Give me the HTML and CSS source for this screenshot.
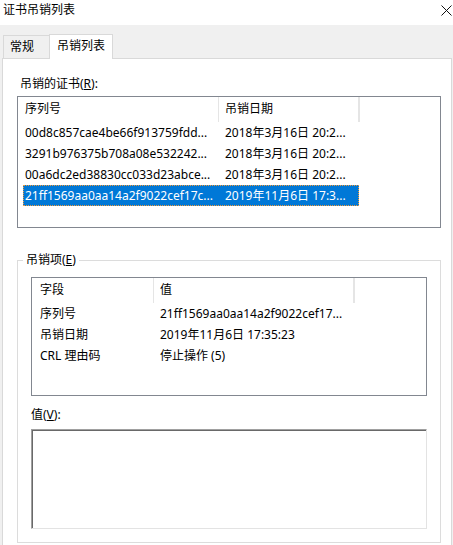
FILE: index.html
```html
<!DOCTYPE html>
<html lang="zh-CN">
<head>
<meta charset="utf-8">
<title>证书吊销列表</title>
<link rel="stylesheet" href="styles.css">
</head>
<body>
<div class="window">
  <div class="titlebar">
    <span class="title">证书吊销列表</span>
    <svg class="close" width="11" height="11" viewBox="0 0 11 11" aria-label="关闭">
      <path d="M0.5 0.5 L10.5 10.5 M10.5 0.5 L0.5 10.5" stroke="#111" stroke-width="1" fill="none"/>
    </svg>
  </div>
  <div class="tabs">
    <div class="tab">常规</div>
    <div class="tab tab-active">吊销列表</div>
  </div>
  <div class="panel">
    <div class="label">吊销的证书(<u>R</u>):</div>
    <div class="listbox list-certs">
      <div class="lv-header">
        <div class="hcell c1">序列号</div>
        <div class="hcell c2">吊销日期</div>
        <div class="hcell c3"></div>
      </div>
      <div class="lv-row">
        <div class="cell c1">00d8c857cae4be66f913759fdd...</div>
        <div class="cell c2">2018年3月16日 20:2...</div>
      </div>
      <div class="lv-row">
        <div class="cell c1">3291b976375b708a08e532242...</div>
        <div class="cell c2">2018年3月16日 20:2...</div>
      </div>
      <div class="lv-row">
        <div class="cell c1">00a6dc2ed38830cc033d23abce...</div>
        <div class="cell c2">2018年3月16日 20:2...</div>
      </div>
      <div class="lv-row selected">
        <div class="cell c1">21ff1569aa0aa14a2f9022cef17c...</div>
        <div class="cell c2">2019年11月6日 17:3...</div>
      </div>
    </div>

    <fieldset class="group">
      <legend class="group-title">吊销项(<u>E</u>)</legend>
      <div class="listbox list-fields">
        <div class="lv-header">
          <div class="hcell c1">字段</div>
          <div class="hcell c2">值</div>
          <div class="hcell c3"></div>
        </div>
        <div class="lv-row">
          <div class="cell c1">序列号</div>
          <div class="cell c2">21ff1569aa0aa14a2f9022cef17...</div>
        </div>
        <div class="lv-row">
          <div class="cell c1">吊销日期</div>
          <div class="cell c2">2019年11月6日 17:35:23</div>
        </div>
        <div class="lv-row">
          <div class="cell c1">CRL 理由码</div>
          <div class="cell c2">停止操作 (5)</div>
        </div>
      </div>
      <div class="label value-label">值(<u>V</u>):</div>
      <div class="valuebox"></div>
    </fieldset>
  </div>
</div>
</body>
</html>
```

FILE: styles.css
```css
html, body {
  margin: 0;
  padding: 0;
}
body {
  background: #f0f0f0;
  font-family: "Noto Sans", "Noto Sans CJK SC", sans-serif;
  font-size: 12px;
  color: #000;
  width: 453px;
  height: 545px;
  overflow: hidden;
}
u {
  text-decoration: underline;
  text-underline-offset: 1px;
}

.window {
  display: flex;
  flex-direction: column;
}

/* title bar */
.titlebar {
  height: 25px;
  background: #fff;
  display: flex;
  justify-content: space-between;
  align-items: flex-start;
  padding: 0 1px 0 3px;
  box-sizing: border-box;
}
.title {
  line-height: 17px;
  padding-top: 1px;
}
.close {
  margin-top: 5px;
}

/* tabs */
.tabs {
  height: 33px;
  display: flex;
  align-items: flex-end;
  padding-left: 3px;
}
.tab {
  width: 46px;
  height: 23px;
  box-sizing: border-box;
  border: 1px solid #d9d9d9;
  border-right: none;
  border-bottom: none;
  padding-left: 6px;
  line-height: 22px;
  background: #f0f0f0;
}
.tab-active {
  position: relative;
  z-index: 1;
  width: 64px;
  height: 25px;
  margin-bottom: -1px;
  border-right: 1px solid #d9d9d9;
  background: #fff;
  padding-left: 7px;
  line-height: 21px;
}

/* panel */
.panel {
  margin: 0 1px 0 2px;
  border: 1px solid #d9d9d9;
  background: #fff;
  padding: 17px 10px 3px 14px;
}
.label {
  line-height: 16px;
  padding-left: 3px;
}

/* list views */
.listbox {
  border: 1px solid #828790;
  box-sizing: border-box;
  background: #fff;
  margin-top: 4px;
  overflow: hidden;
}
.lv-header {
  display: flex;
  height: 25px;
}
.hcell {
  box-sizing: border-box;
  border-right: 1px solid #e5e5e5;
  line-height: 23px;
  white-space: nowrap;
}
.lv-row {
  display: flex;
  height: 21px;
  line-height: 21px;
  margin-left: 5px;
  width: max-content;
}
.cell {
  box-sizing: border-box;
  white-space: nowrap;
  overflow: hidden;
}
.lv-row.selected {
  background: #0078d7;
  color: #fff;
  outline: 1px dotted #f09a3a;
  outline-offset: -1px;
}

.list-certs {
  height: 132px;
}
.list-certs .hcell.c1 { width: 201px; padding-left: 7px; }
.list-certs .hcell.c2 { width: 140px; padding-left: 6px; }
.list-certs .hcell.c3 { width: 1px; }
.list-certs .cell.c1 { width: 195px; padding-left: 2px; }
.list-certs .cell.c2 { width: 141px; padding-left: 7px; }

.list-fields {
  height: 119px;
  margin-top: 0;
}
.list-fields .hcell.c1 { width: 122px; padding-left: 8px; }
.list-fields .hcell.c2 { width: 200px; padding-left: 6px; }
.list-fields .hcell.c3 { width: 1px; }
.list-fields .cell.c1 { width: 117px; padding-left: 3px; }
.list-fields .cell.c2 { width: 240px; padding-left: 6px; }

/* group box */
.group {
  margin: 24px 0 0 0;
  padding: 9px 13px 13px 13px;
  border: 1px solid #dcdcdc;
  min-width: 0;
}
.group-title {
  margin-left: -8px;
  padding: 0 3px;
  line-height: 16px;
}
.value-label {
  margin-top: 11px;
  padding-left: 0;
}
.valuebox {
  margin-top: 6px;
  height: 100px;
  box-sizing: border-box;
  border: 1px solid #e3e3e3;
  border-top-color: #a0a0a0;
  border-left-color: #a0a0a0;
  box-shadow: inset 1px 1px 0 #696969;
  background: #fff;
}
```
